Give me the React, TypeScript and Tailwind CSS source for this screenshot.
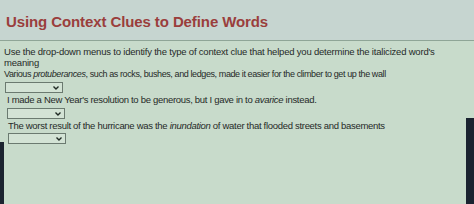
import React from "react";

function Select() {
  return (
    <div className="flex h-[11px] w-[58px] items-center justify-end border border-[#6b7a70] bg-[#d3e3d5] pr-[3px]">
      <svg width="6" height="4" viewBox="0 0 6 4">
        <path d="M0.5 0.5 L3 3 L5.5 0.5" fill="none" stroke="#1f2a24" strokeWidth="1.4" />
      </svg>
    </div>
  );
}

export default function App() {
  return (
    <div
      className="relative h-[204px] w-[474px] overflow-hidden bg-[#c8dbcb] text-[#262a28]"
      style={{ fontFamily: '"Liberation Sans", Arial, sans-serif' }}
    >
      <div className="flex h-[41px] items-center border-b border-[#8fa597] bg-[#c6d5d0] pl-[6px] pt-[4px]">
        <h1 className="text-[15px] font-bold tracking-[-0.1px] text-[#9a3e3c]">Using Context Clues to Define Words</h1>
      </div>
      <div className="flex flex-col whitespace-nowrap pl-[4px] pt-[5px] text-[9.5px] leading-[11px] tracking-[-0.2px]">
        <p>
          Use the drop-down menus to identify the type of context clue that helped you determine the italicized word's
          <br />
          meaning
        </p>
        <p className="mt-[1px] text-[9px] tracking-[-0.4px]">
          Various <i>protuberances</i>, such as rocks, bushes, and ledges, made it easier for the climber to get up the wall
        </p>
        <div className="mt-[2px] pl-[1px]">
          <Select />
        </div>
        <p className="mt-[1px] pl-[3px] tracking-[-0.3px]">
          I made a New Year's resolution to be generous, but I gave in to <i>avarice</i> instead.
        </p>
        <div className="mt-[3px] pl-[3px]">
          <Select />
        </div>
        <p className="mt-[1px] pl-[4px] tracking-[-0.3px]">
          The worst result of the hurricane was the <i>inundation</i> of water that flooded streets and basements
        </p>
        <div className="mt-[2px] pl-[4px]">
          <Select />
        </div>
      </div>
      <div className="absolute bottom-0 left-0 h-[62px] w-[4px] bg-[#1c2430]" />
      <div className="absolute bottom-0 right-0 h-[86px] w-[8px] bg-[#1a2230]" />
    </div>
  );
}
